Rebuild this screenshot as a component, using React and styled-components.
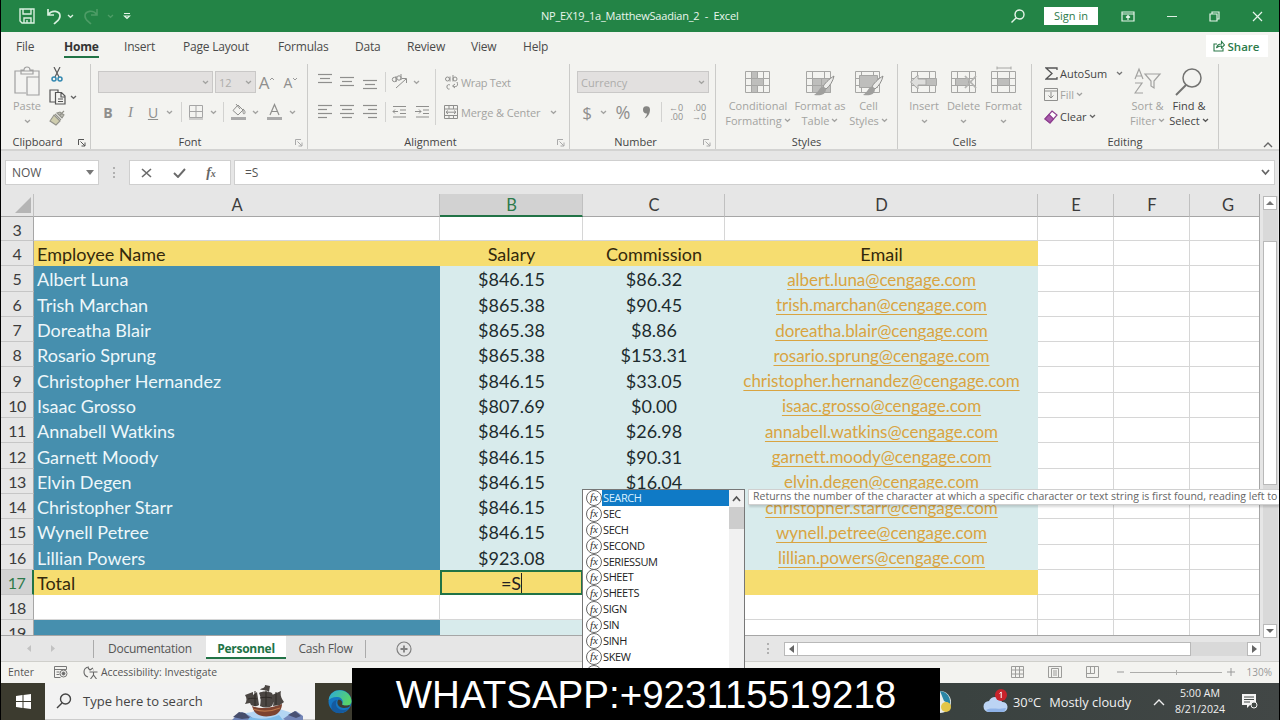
import React from 'react';
import styled, { createGlobalStyle } from 'styled-components';

const people = [
  ['Albert Luna', '$846.15', '$86.32', 'albert.luna@cengage.com'],
  ['Trish Marchan', '$865.38', '$90.45', 'trish.marchan@cengage.com'],
  ['Doreatha Blair', '$865.38', '$8.86', 'doreatha.blair@cengage.com'],
  ['Rosario Sprung', '$865.38', '$153.31', 'rosario.sprung@cengage.com'],
  ['Christopher Hernandez', '$846.15', '$33.05', 'christopher.hernandez@cengage.com'],
  ['Isaac Grosso', '$807.69', '$0.00', 'isaac.grosso@cengage.com'],
  ['Annabell Watkins', '$846.15', '$26.98', 'annabell.watkins@cengage.com'],
  ['Garnett Moody', '$846.15', '$90.31', 'garnett.moody@cengage.com'],
  ['Elvin Degen', '$846.15', '$16.04', 'elvin.degen@cengage.com'],
  ['Christopher Starr', '$846.15', '', 'christopher.starr@cengage.com'],
  ['Wynell Petree', '$846.15', '', 'wynell.petree@cengage.com'],
  ['Lillian Powers', '$923.08', '', 'lillian.powers@cengage.com'],
];

const functions = [
  'SEARCH', 'SEC', 'SECH', 'SECOND', 'SERIESSUM', 'SHEET',
  'SHEETS', 'SIGN', 'SIN', 'SINH', 'SKEW',
];

const menuTabs = ['File', 'Home', 'Insert', 'Page Layout', 'Formulas', 'Data', 'Review', 'View', 'Help'];

const Icon = ({ w = 16, h = 16, box, color = '#8f8f8d', sw = 1, children }) => (
  <Svg width={w} height={h} viewBox={box || `0 0 ${w} ${h}`} stroke={color} strokeWidth={sw} fill="none">
    {children}
  </Svg>
);

const Chevron = ({ color = '#a3a3a1', w = 7 }) => (
  <Icon w={w} h={5} box="0 0 7 5" color={color} sw={1.3}>
    <path d="M1 1l2.5 2.3L6 1" />
  </Icon>
);

const Launcher = ({ color }) => (
  <Icon w={8} h={8} color={color}>
    <path d="M.5 6V.5H6M2.5 2.5L7 7M7 3.5V7H3.5" />
  </Icon>
);

const Lines = ({ rows, y = 0 }) => (
  <Icon w={15} h={18} sw={1.2}>
    {rows.map(([x, len], i) => (
      <path key={i} d={`M${x} ${y + i * 4 + 1.5}h${len}`} />
    ))}
  </Icon>
);

const TableIcon = ({ fill, children, w = 28 }) => (
  <Icon w={w} h={30} color="#a6a6a4">
    <path d="M1.500 5.500h24v21h-24zM1.500 12.500h24M1.500 19.500h24M7.500 5.500v21M19.500 5.500v21" />
    {fill && <path d={fill} fill="#bebebc" stroke="#a6a6a4" />}
    {children}
  </Icon>
);

const Brush = () => (
  <>
    <path d="M29 10c-5 3-10 8-11 11l3 2c4-3 7-8 8-13z" fill="#ececea" stroke="#8f8f8d" />
    <path d="M18 21c-4 0-4 5-9 8 6 1 12 0 12-6z" fill="#9f9f9d" stroke="none" />
  </>
);

const Titlebar = () => (
  <TitleRow>
    <Slot $w={36} $ml={8}>
      <Icon w={16} h={16} color="#d9f0df" sw={1.4}>
        <path d="M1 1h14v14H3l-2-2zM4 1v5h8V1M5 15v-5h7v5M8 15v-3" />
      </Icon>
    </Slot>
    <Slot $w={18}>
      <Icon w={16} h={17} color="#d9f0df" sw={1.7}>
        <path d="M2 1v6h6M2 7c4-6 12-4 12 1 0 4-3 5-6 8" />
      </Icon>
    </Slot>
    <Slot $w={14}><Chevron color="#d9f0df" /></Slot>
    <Slot $w={28}>
      <Icon w={16} h={17} color="#4d9c66" sw={1.6}>
        <path d="M14 1v6H8M14 7C10 1 2 3 2 8c0 4 3 5 6 8" />
      </Icon>
    </Slot>
    <Slot $w={10}><Chevron color="#4d9c66" /></Slot>
    <Slot $w={24}>
      <Icon w={8} h={8} color="#e4f4e8" sw={1.2}><path d="M1 1.500h6M1.500 4l2.500 2.500L6.500 4z" /></Icon>
    </Slot>
    <DocTitle>NP_EX19_1a_MatthewSaadian_2&nbsp; -&nbsp; Excel</DocTitle>
    <Slot $w={26}>
      <Icon w={14} h={14} color="#e4f4e8" sw={1.4}><circle cx="8.500" cy="5.500" r="4.500" /><path d="M5 9l-4.500 4.500" /></Icon>
    </Slot>
    <SignIn>Sign in</SignIn>
    <Slot $w={60}>
      <Icon w={14} h={11} color="#e4f4e8" sw={1.2}><path d="M1 1h12v9H1zM1 3h12M7 9V4.500M5 6.500l2-2 2 2" /></Icon>
    </Slot>
    <Slot $w={28}><Icon w={10} h={3} color="#dff0e4"><path d="M0 1.500h10" /></Icon></Slot>
    <Slot $w={57}>
      <Icon w={11} h={11} color="#e4f4e8" sw={1.2}><path d="M1 3h7v7H1zM3 3V1h7v7H8" /></Icon>
    </Slot>
    <Slot $w={29}><Icon w={11} h={11} color="#e8f5ec" sw={1.2}><path d="M1 1l9 9M10 1l-9 9" /></Icon></Slot>
  </TitleRow>
);

const RibbonTabs = () => (
  <TabRow>
    {menuTabs.map((tab) => (
      <MenuTab key={tab} $active={tab === 'Home'}>{tab}</MenuTab>
    ))}
    <Share>
      <Icon w={12} h={12} color="#2c7a4b" sw={1.1}>
        <path d="M4 4H1v7h9V8M3.500 8c.5-3 2-4 5-4V1.500L11.500 5 8.500 8V6c-2 0-3.500 0-5 2z" />
      </Icon>
      Share
    </Share>
  </TabRow>
);

const ClipboardGroup = () => (
  <Group $w={90}>
    <Body $pl={4}>
      <BigTool $w={44}>
        <Icon w={28} h={30} color="#a0a0a0" sw={1.2}>
          <path d="M13 27H2V5h24v6M8 8V4h3c0-4 6-4 6 0h3v4zM14 11h12v18H14z" fill="#f3f3f1" />
        </Icon>
        <span>Paste</span>
        <Chevron />
      </BigTool>
      <Stack>
        <Line $h={22} $gap={7}>
          <Icon w={16} h={16} sw={1.2}>
            <path d="M5 0l5 10M11 0L6 10" stroke="#5a5a5a" />
            <g stroke="#3288b0" strokeWidth="1.500"><circle cx="5" cy="12" r="2" /><circle cx="11" cy="12" r="2" /></g>
          </Icon>
        </Line>
        <Line $h={22} $gap={4}>
          <Icon w={17} h={16} color="#555" sw={1.2}>
            <path d="M6 13H1V1h8v2M6.500 3.500h6l3.500 3.500v8H6.500zM12 4v4h4M9 10h5M9 12.500h5" />
          </Icon>
          <Chevron color="#666" />
        </Line>
        <Line $h={20}>
          <Icon w={17} h={16} color="#92928a" sw={1.1}>
            <path d="M15 1l-4 4M6 4l6 6M8 3l5 5 2-3-4-3z" fill="#b9b9b0" />
            <path d="M5 5l6 6-4 4-6-4z" fill="#cfcdae" />
          </Icon>
        </Line>
      </Stack>
    </Body>
    <GroupLabel $pr={16}>Clipboard</GroupLabel>
    <Corner><Launcher color="#555" /></Corner>
  </Group>
);

const FontGroup = () => (
  <Group $w={217}>
    <ToolRow $pl={7}>
      <Combo $w={115}><Chevron /></Combo>
      <Combo $w={41} $ml={2}><span>12</span><Chevron /></Combo>
      <Slot $w={22}><Letter $size={17}>A</Letter><Icon w={6} h={12} color="#999"><path d="M1 4l2-2 2 2" /></Icon></Slot>
      <Slot $w={22} $ml={2}><Letter $size={14}>A</Letter><Icon w={6} h={12} color="#999"><path d="M1 2l2 2 2-2" /></Icon></Slot>
    </ToolRow>
    <ToolRow $pl={6}>
      <Slot $w={22}><Letter $size={14} $bold>B</Letter></Slot>
      <Slot $w={23}><Letter $size={15} $italic>I</Letter></Slot>
      <Slot $w={22}><Letter $size={14} $under>U</Letter></Slot>
      <Slot $w={11}><Chevron /></Slot>
      <Bar $ml={6} />
      <Slot $w={28}><Icon w={16} h={16} color="#a5a5a5"><path d="M1.500 1.500h13v12h-13zM8 1v13M1 7.500h14M1 15h14" /></Icon></Slot>
      <Slot $w={7}><Chevron /></Slot>
      <Bar $ml={6} />
      <Slot $w={28}>
        <Icon w={17} h={18}>
          <path d="M8 2L3 7.500l5 4.500 5-5zM6 1l4 5M13 6c3 2 2 5 1 5s-1-2-1-5z" />
          <path d="M1 15.500h15" strokeWidth="3" stroke="#aaa" />
        </Icon>
      </Slot>
      <Slot $w={7}><Chevron /></Slot>
      <Slot $w={30}>
        <Icon w={15} h={18}>
          <path d="M3 12L7.500 1.500 12 12M4.500 8.500h6" strokeWidth="1.200" />
          <path d="M0 15.500h15" strokeWidth="3" stroke="#aaa" />
        </Icon>
      </Slot>
      <Slot $w={7}><Chevron /></Slot>
    </ToolRow>
    <GroupLabel $pr={18}>Font</GroupLabel>
    <Corner><Launcher color="#aaa" /></Corner>
  </Group>
);

const AlignmentGroup = () => (
  <Group $w={262}>
    <Body>
      <Stack>
        <ToolRow $pl={6}>
          <Slot $w={22}><Lines rows={[[0, 14], [2, 10], [0, 14]]} y={0} /></Slot>
          <Slot $w={23}><Lines rows={[[0, 14], [2, 10], [0, 14]]} y={3} /></Slot>
          <Slot $w={22}><Lines rows={[[0, 14], [2, 10], [0, 14]]} y={6} /></Slot>
          <Bar $ml={4} />
          <Slot $w={27}>
            <Icon w={17} h={16}>
              <circle cx="3.500" cy="5.500" r="2.200" /><circle cx="8" cy="4" r="2.200" /><path d="M5 2v6M10 0v6M5 14L15 5M11 4.500h4.500V9" />
            </Icon>
          </Slot>
          <Slot $w={7}><Chevron /></Slot>
        </ToolRow>
        <ToolRow $pl={6}>
          <Slot $w={22}><Lines rows={[[0, 14], [0, 9], [0, 14], [0, 9]]} y={1} /></Slot>
          <Slot $w={23}><Lines rows={[[0, 14], [2, 10], [0, 14], [2, 10]]} y={1} /></Slot>
          <Slot $w={22}><Lines rows={[[0, 14], [5, 9], [0, 14], [5, 9]]} y={1} /></Slot>
          <Bar $ml={4} />
          <Slot $w={27}><Icon w={15} h={14}><path d="M1 1.500h13M8 5h6M8 8.500h6M1 12h13M6 6.500H1M3 4.500l-2 2 2 2" /></Icon></Slot>
          <Slot $w={18}><Icon w={15} h={14}><path d="M1 1.500h13M8 5h6M8 8.500h6M1 12h13M0 6.500h6M4 4.500l2 2-2 2" /></Icon></Slot>
        </ToolRow>
      </Stack>
      <Bar $h={56} $ml={4} $mt={5} />
      <Stack>
        <ToolRow $pl={6}>
          <Slot $w={19}>
            <Icon w={15} h={17}>
              <circle cx="3.500" cy="5" r="2" /><path d="M6 2.500V7.500M9 1v6.500M6 11c-4-2-4 5-.5 4M13 8c2 5-2 5-4 4M11 10l-2.500 2 2.500 2" /><circle cx="11" cy="5" r="2" />
            </Icon>
          </Slot>
          <Dim $ls={-0.3}>Wrap Text</Dim>
        </ToolRow>
        <ToolRow $pl={6}>
          <Slot $w={19}>
            <Icon w={15} h={15}><path d="M.5 .5h13v13H.5zM.5 4h13M.5 10.500h13M5 .5V4M9.500 .5V4M5 10.500v3M9.500 10.500v3M2 7.200h10M4 5.500L2 7.200 4 9M10 5.500l2 1.700L10 9" /></Icon>
          </Slot>
          <Dim $ls={-0.1}>Merge &amp; Center</Dim>
          <Slot $w={7} $ml={9}><Chevron /></Slot>
        </ToolRow>
      </Stack>
    </Body>
    <GroupLabel $pr={16}>Alignment</GroupLabel>
    <Corner><Launcher color="#aaa" /></Corner>
  </Group>
);

const NumberGroup = () => (
  <Group $w={146}>
    <ToolRow $pl={7}>
      <Combo $w={132}><span>Currency</span><Chevron /></Combo>
    </ToolRow>
    <ToolRow $pl={6}>
      <Slot $w={22}><Letter $size={17}>$</Letter></Slot>
      <Slot $w={10}><Chevron /></Slot>
      <Slot $w={30}><Letter $size={18}>%</Letter></Slot>
      <Slot $w={18}>
        <Icon w={10} h={15} sw={0}><path d="M1 5a3.500 3.500 0 1 1 7-.5c0 5-3 8-5.500 9 1.500-2 2.500-4 2.500-5C3 9 1 7.500 1 5z" fill="#858583" /></Icon>
      </Slot>
      <Bar $ml={5} />
      <Slot $w={28}><Decimals><span>←0</span><span>.00</span></Decimals></Slot>
      <Slot $w={18}><Decimals><span>.00</span><span>→0</span></Decimals></Slot>
    </ToolRow>
    <GroupLabel $pr={14}>Number</GroupLabel>
    <Corner><Launcher color="#aaa" /></Corner>
  </Group>
);

const StylesGroup = () => (
  <Group $w={182}>
    <Body $pl={7}>
      <BigTool $w={70}>
        <TableIcon fill="M7.500 5.500h6v7h6v7h-6v7h-6z"><path d="M7.500 12.500h6M7.500 19.500h6" /></TableIcon>
        <span>Conditional</span>
        <span>Formatting <Chevron /></span>
      </BigTool>
      <BigTool $w={54}>
        <TableIcon fill="M7.500 12.500h18v14h-18z" w={30}><path d="M7.500 19.500h18M16.500 12.500v14" /><Brush /></TableIcon>
        <span>Format as</span>
        <span>Table <Chevron /></span>
      </BigTool>
      <BigTool $w={43}>
        <TableIcon fill="M5.500 9.500h18v12h-18z" w={30}><Brush /></TableIcon>
        <span>Cell</span>
        <span>Styles <Chevron /></span>
      </BigTool>
    </Body>
    <GroupLabel>Styles</GroupLabel>
  </Group>
);

const CellsGroup = () => (
  <Group $w={134}>
    <Body $pl={6}>
      <BigTool $w={40}>
        <TableIcon fill="M9.500 12.500h17v7h-17z"><path d="M8 9l-7.500 7L8 23v-4h8v-6H8z" fill="#dededc" /></TableIcon>
        <span>Insert</span>
        <Chevron />
      </BigTool>
      <BigTool $w={39}>
        <TableIcon fill="M5.500 12.500h13v7h-13z"><path d="M15 10l11 12M26 10L15 22" strokeWidth="1.800" stroke="#b4b4b2" /></TableIcon>
        <span>Delete</span>
        <Chevron />
      </BigTool>
      <BigTool $w={41}>
        <TableIcon fill="M7.500 12.500h12v7h-12z"><path d="M7 2h14M7 .5v3M21 .5v3" /></TableIcon>
        <span>Format</span>
        <Chevron />
      </BigTool>
    </Body>
    <GroupLabel>Cells</GroupLabel>
  </Group>
);

const EditingGroup = () => (
  <Group $w={187}>
    <Body $pl={10}>
      <Stack $w={86}>
        <Line $h={19}>
          <Slot $w={18}><Icon w={13} h={13} color="#555" sw={1.3}><path d="M12 3V1H1l6 5.500L1 12h11v-2" /></Icon></Slot>
          <Dark>AutoSum</Dark>
          <Slot $w={7} $ml={9}><Chevron color="#777" /></Slot>
        </Line>
        <Line $h={23}>
          <Slot $w={18}><Icon w={14} h={13}><path d="M.5 .5h13v12H.5zM.5 3h13M7 4v6M4.500 7.500L7 10l2.500-2.500" /></Icon></Slot>
          <Dim>Fill</Dim>
          <Slot $w={10}><Chevron /></Slot>
        </Line>
        <Line $h={21}>
          <Slot $w={18}>
            <Icon w={14} h={14} color="#8d3f8f" sw={1.2}><path d="M8 1l5 4-7 8-5-4z" fill="#fff" /><path d="M5 4.500L9.500 9 6 13 1 9z" fill="#a95bab" /></Icon>
          </Slot>
          <Dark>Clear</Dark>
          <Slot $w={11}><Chevron color="#666" /></Slot>
        </Line>
      </Stack>
      <BigTool $w={39}>
        <Icon w={28} h={30} sw={1.2} color="#a2a2a0">
          <path d="M1 13L5 3l4 10M2.500 10h5M1 17h7L1 27h8M11 8h15l-6 7v7l-3-2v-5z" />
        </Icon>
        <span>Sort &amp;</span>
        <span>Filter <Chevron /></span>
      </BigTool>
      <BigTool $w={44} $dark>
        <Icon w={30} h={30} color="#737371" sw={1.5}><circle cx="18" cy="12" r="9" /><path d="M12 19L2 29" strokeWidth="2" /></Icon>
        <span>Find &amp;</span>
        <span>Select <Chevron color="#555" /></span>
      </BigTool>
    </Body>
    <GroupLabel>Editing</GroupLabel>
  </Group>
);

const FormulaBar = () => (
  <FormulaRow>
    <Field $w={94}>
      <FieldText $pl={6}>NOW</FieldText>
      <Icon w={8} h={5} sw={0}><path d="M0 0h8L4 5z" fill="#777" /></Icon>
    </Field>
    <Slot $w={30}><Dots /></Slot>
    <Field $w={102}>
      <Slot $w={33}><Icon w={11} h={10} color="#6a6a6a" sw={1.6}><path d="M1 1l9 8M10 1L1 9" /></Icon></Slot>
      <Slot $w={33}><Icon w={13} h={10} color="#6a6a6a" sw={1.9}><path d="M1 5l4 4 7-8" /></Icon></Slot>
      <Slot $w={30}><Fx>f<small>x</small></Fx></Slot>
    </Field>
    <Field $w={1041} $ml={3}>
      <FieldText $pl={10}>=S</FieldText>
      <Icon w={9} h={7} color="#666" sw={1.8}><path d="M1 1l3.500 4L8 1" /></Icon>
    </Field>
  </FormulaRow>
);

const Sheet = () => (
  <SheetArea>
    <Grid>
      <ColHead $corner>
        <Icon w={16} h={16} sw={0}><path d="M16 0v16H0z" fill="#b5b5b5" /></Icon>
      </ColHead>
      {['A', 'B', 'C', 'D', 'E', 'F', 'G'].map((c) => (
        <ColHead key={c} $active={c === 'B'}>{c}</ColHead>
      ))}

      <RowHead>3</RowHead>
      <Cell /><Cell /><Cell /><Cell /><Cell /><Cell /><Cell />

      <RowHead>4</RowHead>
      <Cell $tone="gold" $left>Employee Name</Cell>
      <Cell $tone="gold">Salary</Cell>
      <Cell $tone="gold">Commission</Cell>
      <Cell $tone="gold">Email</Cell>
      <Cell /><Cell /><Cell />

      {people.map(([name, salary, commission, email], i) => (
        <React.Fragment key={name}>
          <RowHead>{i + 5}</RowHead>
          <Cell $tone="blue" $left>{name}</Cell>
          <Cell $tone="pale">{salary}</Cell>
          <Cell $tone="pale">{commission}</Cell>
          <Cell $tone="pale"><Email>{email}</Email></Cell>
          <Cell /><Cell /><Cell />
        </React.Fragment>
      ))}

      <RowHead $active>17</RowHead>
      <Cell $tone="gold" $left>Total</Cell>
      <EditCell>=S<Caret /></EditCell>
      <Cell $tone="gold" />
      <Cell $tone="gold" />
      <Cell /><Cell /><Cell />

      <RowHead>18</RowHead>
      <Cell /><Cell /><Cell /><Cell /><Cell /><Cell /><Cell />

      <RowHead>19</RowHead>
      <Cell $tone="blue" />
      <Cell $tone="pale" />
      <Cell /><Cell /><Cell /><Cell /><Cell />
    </Grid>
    <VScroll>
      <ScrollButton><Icon w={8} h={4} sw={0}><path d="M0 4h8L4 0z" fill="#777" /></Icon></ScrollButton>
      <VThumb />
      <ScrollButton><Icon w={8} h={4} sw={0}><path d="M0 0h8L4 4z" fill="#666" /></Icon></ScrollButton>
    </VScroll>
    <Suggestions>
      <SuggestionList>
        {functions.map((fn, i) => (
          <Suggestion key={fn}>
            <FxBadge><i>fx</i></FxBadge>
            <SuggestionName $active={i === 0}>{fn}</SuggestionName>
          </Suggestion>
        ))}
        <Suggestion><FxBadge /></Suggestion>
      </SuggestionList>
      <SuggestionScroll>
        <Slot $w={15}><Icon w={9} h={17} color="#555" sw={1.7}><path d="M1 11l3.500-4L8 11" /></Icon></Slot>
        <SuggestionThumb />
      </SuggestionScroll>
    </Suggestions>
    <Hint>Returns the number of the character at which a specific character or text string is first found, reading left to</Hint>
  </SheetArea>
);

const SheetTabs = () => (
  <SheetTabRow>
    <Slot $w={24} $ml={15}><Icon w={5} h={7} sw={0}><path d="M5 0v7L1 3.500z" fill="#c2c2c2" /></Icon></Slot>
    <Slot $w={26}><Icon w={5} h={7} sw={0}><path d="M0 0v7l4-3.500z" fill="#c2c2c2" /></Icon></Slot>
    <Bar $h={18} $ml={27} $dark />
    <SheetTab $w={112}>Documentation</SheetTab>
    <SheetTab $w={80} $active>Personnel</SheetTab>
    <SheetTab $w={79}>Cash Flow</SheetTab>
    <Bar $h={18} $dark />
    <Slot $w={76}>
      <Icon w={16} h={16} color="#808080" sw={1.2}><circle cx="8" cy="8" r="7" /><path d="M8 4.500v7M4.500 8h7" strokeWidth="1.800" /></Icon>
    </Slot>
    <Spacer />
    <Slot $w={32}><Dots /></Slot>
    <ScrollButton><Icon w={5} h={8} sw={0}><path d="M5 0v8L0 4z" fill="#666" /></Icon></ScrollButton>
    <HThumb />
    <HTrack />
    <ScrollButton><Icon w={5} h={8} sw={0}><path d="M0 0v8l5-4z" fill="#666" /></Icon></ScrollButton>
  </SheetTabRow>
);

const StatusBar = () => (
  <StatusRow>
    <StatusText $w={46}>Enter</StatusText>
    <Icon w={14} h={12} color="#777"><path d="M.5 .5h12v3M.5 .5v11h6M.5 3.500h12M2.500 6h3M2.500 8.500h3" /><circle cx="9.500" cy="7.500" r="3.500" /><circle cx="9.500" cy="7.500" r="1.500" fill="#666" /></Icon>
    <Slot $w={15} $ml={15}>
      <Icon w={15} h={13} color="#666" sw={1.1}><path d="M6 1C2 1 1 4 1 6s1 4 4 5M5 2l2 2 3-2M10 4h.5M6.500 6h8M10.500 6v3l-3 4M10.500 9l3 4" /></Icon>
    </Slot>
    <StatusText $ml={3} $w={200}>Accessibility: Investigate</StatusText>
    <Spacer />
    <Icon w={13} h={12} color="#9c9c9a"><path d="M.5 .5h12v11H.5zM4.500 .5v11M8.500 .5v11M.5 4h12M.5 8h12" /></Icon>
    <Slot $w={14} $ml={24}><Icon w={14} h={12} color="#9c9c9a"><path d="M.5 .5h13v11H.5zM3.500 2.500h7v9M3.500 2.500v9M5 5h4M5 7h4M5 9h4" /></Icon></Slot>
    <Slot $w={14} $ml={24}><Icon w={13} h={12} color="#9c9c9a"><path d="M.5 .5h12v11H.5zM4.500 .5v7M8.500 .5v7h-8" /></Icon></Slot>
    <Slot $w={7} $ml={17}><Icon w={7} h={2} color="#999"><path d="M0 1h7" /></Icon></Slot>
    <Slot $w={92} $ml={6}><Icon w={92} h={7} color="#adadab"><path d="M0 3.500h92M46.500 1v5" /></Icon></Slot>
    <Slot $w={8} $ml={5}><Icon w={8} h={8} color="#999"><path d="M0 4h8M4 0v8" /></Icon></Slot>
    <Zoom>130%</Zoom>
  </StatusRow>
);

const Ship = () => (
  <Svg width="76" height="37" viewBox="0 0 76 37">
    <path d="M8 37c5-6 9-7 16-8 12-4 26-4 34-1 7 2 10 5 14 9z" fill="#b3d5f3" />
    <path d="M4 37l4-4 6-4 8 4 5 4z" fill="#6f84b8" />
    <path d="M5 34l6-5 6 1 5 5-8 1z" fill="#474e6c" />
    <path d="M55 36l7-5 6-3 7 5v4H57z" fill="#7486b8" />
    <path d="M60 32l7-4 6 5-5 2z" fill="#4a5173" />
    <path d="M24 23c8 3 17 3 30-2 0 5-3 9-7 11-6 2-14 2-18-1-3-2-4-5-5-8z" fill="#7d4330" />
    <path d="M25 26c8 3 17 3 27-1" stroke="#b9764a" strokeWidth="1.200" fill="none" />
    <path d="M17 12l8-3v3l4-3 2 13c-3 2-6 1-8 0l-1-2-5 1c2-3 2-6 0-9zM31 10c3-2 9-2 13 0 2 4 2 9 0 13-4 2-8 2-12 0 1-5 1-9-1-13zM44 12l9-4c-1 4 0 7 3 11l-4 3-7 1c1-4 0-7-1-11z" fill="#4b4643" />
    <path d="M27 8v15M38 5v18M48 9v13M20 16c3-1 7-1 9 0M32 15c4-1 8-1 12 0" stroke="#2f2a27" strokeWidth="1" fill="none" />
    <path d="M32 7c2-3 5-1 5-5l5 1-1 6-3-2c-2 1-4-1-6 0z" fill="#4b4643" />
    <path d="M22 34c10 3 20 2 29-2l4 5H20z" fill="#7dbbe9" />
  </Svg>
);

const EdgeLogo = () => (
  <Svg width="24" height="25" viewBox="0 0 24 25">
    <defs>
      <linearGradient id="edgeTop" x1="0" y1="0" x2="1" y2="0.400">
        <stop offset="0" stopColor="#2ba9dd" />
        <stop offset="1" stopColor="#58d36a" />
      </linearGradient>
    </defs>
    <circle cx="12" cy="12.500" r="11.500" fill="#1476c2" />
    <path d="M.7 11C2-2 22-2 23.500 12c.3 5-7 6-9.500 3.500 2-3 0-7-4-7.500C6 7.500 2 9 .7 11z" fill="url(#edgeTop)" />
    <path d="M9 11c-3 4 0 10 6 10 2 0 4 0 6-2-4 6-12 7-17 2C2 16 5 11 9 11z" fill="#155a9e" />
    <path d="M10 11c-2 4 1 8 6 8 3 0 5-1 6-2 .5-2-5 1-8-1.500C15 13 13 10 10 11z" fill="#3d3d33" />
  </Svg>
);

const Taskbar = () => (
  <TaskRow>
    <Slot $w={44}>
      <Icon w={17} h={17} sw={0}><path d="M1 3l6.500-1v6H1zM8.500 2L16 1v7H8.500zM1 9h6.500v6L1 14zM8.500 9H16v7l-7.500-1z" fill="#fff" /></Icon>
    </Slot>
    <SearchBox>
      <Icon w={16} h={16} color="#444" sw={1.4}><circle cx="9.500" cy="6" r="5" /><path d="M6 10l-5 5" /></Icon>
      <SearchText>Type here to search</SearchText>
      <Ship />
    </SearchBox>
    <Slot $w={24} $ml={13}><EdgeLogo /></Slot>
    <Spacer />
    <Slot $w={24}>
      <Svg width="24" height="24" viewBox="0 0 24 24">
        <circle cx="12" cy="12" r="11" fill="#e8ecea" />
        <path d="M12 1a11 11 0 0 1 10 13l-6-3z" fill="#2a86a6" />
        <circle cx="18" cy="17" r="5" fill="#e3c648" />
      </Svg>
    </Slot>
    <Slot $w={26} $ml={31}>
      <Svg width="26" height="28" viewBox="0 0 26 28">
        <path d="M6 24a5.500 5.500 0 0 1 0-11 7 7 0 0 1 13 1 5 5 0 0 1 1 10z" fill="#bcd4f4" />
        <path d="M3 22c6-3 10 0 20-2-1 3-2 4-4 4H6c-1 0-2-1-3-2z" fill="#8fb3e8" />
        <circle cx="18" cy="7" r="6" fill="#c8232c" />
        <path d="M16.500 5.500l1.700-1.500v6" stroke="#fff" fill="none" />
      </Svg>
    </Slot>
    <Weather><span>30°C</span><span>Mostly cloudy</span></Weather>
    <Slot $w={12}><Icon w={12} h={8} color="#eee" sw={1.4}><path d="M1 7l5-5 5 5" /></Icon></Slot>
    <Clock><span>5:00 AM</span><span>8/21/2024</span></Clock>
    <Slot $w={18}>
      <Icon w={17} h={17} sw={0}>
        <path d="M1 1h14v11H9l-3 3v-3H1z" fill="#f4f4f4" />
        <path d="M3 4h10M3 6.500h10M3 9h6" stroke="#444b48" strokeWidth="1" />
        <circle cx="13" cy="12" r="3" stroke="#f4f4f4" strokeWidth="1" fill="#444b48" />
      </Icon>
    </Slot>
  </TaskRow>
);

const App = () => (
  <Screen>
    <GlobalStyle />
    <Titlebar />
    <Ribbon>
      <RibbonTabs />
      <Groups>
        <ClipboardGroup />
        <FontGroup />
        <AlignmentGroup />
        <NumberGroup />
        <StylesGroup />
        <CellsGroup />
        <EditingGroup />
        <Collapse><Icon w={10} h={7} color="#666" sw={1.4}><path d="M1 6l4-4 4 4" /></Icon></Collapse>
      </Groups>
    </Ribbon>
    <FormulaBar />
    <Sheet />
    <SheetTabs />
    <StatusBar />
    <Taskbar />
    <Banner>WHATSAPP:+923115519218</Banner>
  </Screen>
);

const GlobalStyle = createGlobalStyle`
  * {
    box-sizing: border-box;
  }

  body {
    margin: 0;
    background: #000;
    overflow: hidden;
  }
`;

const Screen = styled.div`
  position: relative;
  display: flex;
  flex-direction: column;
  width: 1280px;
  height: 720px;
  overflow: hidden;
  border-left: 1px solid #000;
  border-right: 1px solid #000;
  background: #e6e6e6;
  color: #444;
  font-family: 'Open Sans', 'Noto Sans', sans-serif;
  font-size: 11px;
  white-space: nowrap;
`;

const Svg = styled.svg`
  display: block;
  flex: none;
`;

const Slot = styled.div`
  display: flex;
  flex: none;
  align-items: center;
  justify-content: center;
  width: ${(p) => p.$w}px;
  margin-left: ${(p) => p.$ml || 0}px;
`;

const Spacer = styled.div`
  flex: 1;
`;

const Bar = styled.div`
  flex: none;
  width: 1px;
  height: ${(p) => p.$h || 20}px;
  margin-left: ${(p) => p.$ml || 0}px;
  margin-top: ${(p) => p.$mt || 0}px;
  background: ${(p) => (p.$dark ? '#ababab' : '#d2d2d0')};
`;

const TitleRow = styled.header`
  display: flex;
  align-items: center;
  flex: none;
  height: 32px;
  padding-right: 7px;
  background: #238446;
`;

const DocTitle = styled.div`
  flex: 1;
  padding: 0 0 2px 402px;
  color: #eaf6ed;
  font-size: 11px;
  letter-spacing: -0.2px;
`;

const SignIn = styled.div`
  width: 54px;
  height: 18px;
  margin-left: 13px;
  background: #fff;
  color: #2c7a4b;
  line-height: 18px;
  text-align: center;
`;

const Ribbon = styled.section`
  flex: none;
  height: 119px;
  border-bottom: 2px solid #d3d3d2;
  background: #f3f3f0;
`;

const TabRow = styled.nav`
  display: grid;
  grid-template-columns: 48px 60px 59px 95px 77px 52px 64px 52px 1fr 62px;
  height: 32px;
  padding: 3px 11px 0 15px;
`;

const MenuTab = styled.div`
  justify-self: start;
  height: 23px;
  border-bottom: 2px solid ${(p) => (p.$active ? '#217346' : 'transparent')};
  color: ${(p) => (p.$active ? '#333' : '#4a4a4a')};
  font-size: 12px;
  font-weight: ${(p) => (p.$active ? 700 : 400)};
  letter-spacing: -0.2px;
  line-height: 23px;
`;

const Share = styled.div`
  display: flex;
  align-items: center;
  justify-content: center;
  gap: 3px;
  height: 22px;
  padding-right: 2px;
  background: #fff;
  color: #2c7a4b;
  font-size: 11.5px;
  font-weight: 600;
`;

const Groups = styled.div`
  display: flex;
  height: 85px;
`;

const Group = styled.div`
  position: relative;
  display: flex;
  flex-direction: column;
  flex: none;
  width: ${(p) => p.$w}px;
  border-right: 1px solid #cbcbc9;
`;

const Body = styled.div`
  display: flex;
  padding-left: ${(p) => p.$pl || 0}px;
`;

const Stack = styled.div`
  display: flex;
  flex-direction: column;
  width: ${(p) => (p.$w ? `${p.$w}px` : 'auto')};
`;

const Line = styled.div`
  display: flex;
  align-items: center;
  gap: ${(p) => p.$gap || 0}px;
  height: ${(p) => p.$h}px;
`;

const ToolRow = styled.div`
  display: flex;
  align-items: center;
  height: 24px;
  margin-top: 6px;
  padding-left: ${(p) => p.$pl}px;
`;

const BigTool = styled.div`
  display: flex;
  flex-direction: column;
  align-items: center;
  flex: none;
  width: ${(p) => p.$w}px;
  padding-top: 2px;
  color: ${(p) => (p.$dark ? '#444' : '#a3a3a1')};

  > svg:first-child {
    margin-bottom: 2px;
  }

  > span {
    display: flex;
    align-items: center;
    gap: 2px;
    height: 15px;
  }

  > svg:last-child {
    margin-top: 6px;
  }
`;

const GroupLabel = styled.div`
  margin-top: auto;
  padding-right: ${(p) => p.$pr || 0}px;
  color: #444;
  line-height: 14px;
  text-align: center;
`;

const Corner = styled.div`
  position: absolute;
  right: 4px;
  bottom: 2px;
`;

const Combo = styled.div`
  display: flex;
  align-items: center;
  justify-content: space-between;
  width: ${(p) => p.$w}px;
  height: 22px;
  margin-left: ${(p) => p.$ml || 0}px;
  padding: 0 3px;
  border: 1px solid #c9c8c7;
  background: #e2e0df;
  color: #adadab;

  > svg:only-child {
    margin-left: auto;
  }
`;

const Letter = styled.span`
  color: #8f8f8d;
  font-size: ${(p) => p.$size}px;
  font-style: ${(p) => (p.$italic ? 'italic' : 'normal')};
  font-family: ${(p) => (p.$italic ? "'Liberation Serif', serif" : 'inherit')};
  font-weight: ${(p) => (p.$bold ? 700 : 400)};
  text-decoration: ${(p) => (p.$under ? 'underline' : 'none')};
`;

const Decimals = styled.div`
  display: flex;
  flex-direction: column;
  align-items: flex-end;
  color: #8f8f8d;
  font-size: 9px;
  line-height: 9px;
`;

const Dim = styled.span`
  color: #a3a3a1;
  letter-spacing: ${(p) => p.$ls || 0}px;
`;

const Dark = styled.span`
  color: #444;
`;

const Collapse = styled.div`
  display: flex;
  flex: 1;
  align-items: flex-end;
  justify-content: flex-end;
  padding: 0 6px 1px 0;
`;

const FormulaRow = styled.div`
  display: flex;
  flex: none;
  align-items: center;
  height: 43px;
  padding-left: 4px;
`;

const Field = styled.div`
  display: flex;
  align-items: center;
  justify-content: space-between;
  flex: none;
  width: ${(p) => p.$w}px;
  height: 25px;
  margin-left: ${(p) => p.$ml || 0}px;
  padding-right: 4px;
  border: 1px solid #cfcfcf;
  background: #fff;
`;

const FieldText = styled.span`
  padding-left: ${(p) => p.$pl}px;
  color: #555;
  font-size: 12px;
`;

const Fx = styled.span`
  color: #666;
  font: italic 700 14px 'Liberation Serif', serif;

  small {
    font-size: 10px;
  }
`;

const Dots = styled.div`
  height: 11px;
  border-left: 2px dotted #b0b0b0;
`;

const SheetArea = styled.main`
  position: relative;
  display: flex;
  flex: none;
  height: 442px;
`;

const Grid = styled.div`
  display: grid;
  grid-template-columns: 33px 406px 143px 142px 313px 76px 76px 76px;
  grid-template-rows: 23px 24px repeat(14, 25.3px) 25px 25.3px;
  align-content: start;
  width: 1259px;
  overflow: hidden;
  border-right: 1px solid #a6a6a6;
  border-bottom: 1px solid #a6a6a6;
  color: #1d1d1d;
  font-family: Lato, 'Open Sans', sans-serif;
  font-size: 18px;
`;

const ColHead = styled.div`
  display: flex;
  align-items: center;
  justify-content: ${(p) => (p.$corner ? 'flex-end' : 'center')};
  padding: 0 ${(p) => (p.$corner ? 2 : 0)}px 0 1px;
  border-right: 1px solid #c0c0c0;
  border-bottom: ${(p) => (p.$active ? '2px solid #217346' : '1px solid #a6a6a6')};
  background: ${(p) => (p.$active ? '#d2d2d2' : '#e6e6e6')};
  color: ${(p) => (p.$active ? '#2d7a4b' : '#3c3c3c')};
  font-size: 16.5px;
`;

const RowHead = styled.div`
  display: flex;
  align-items: center;
  justify-content: center;
  padding-top: 1px;
  border-right: ${(p) => (p.$active ? '2px solid #217346' : '1px solid #a6a6a6')};
  border-bottom: 1px solid #c6c6c6;
  background: ${(p) => (p.$active ? '#d2d2d2' : '#e6e6e6')};
  color: ${(p) => (p.$active ? '#2d7a4b' : '#3c3c3c')};
  font-size: 16px;
  letter-spacing: -0.5px;
`;

const tones = {
  gold: ['#f6dd70', '#33290c'],
  blue: ['#468fae', '#eef7fa'],
  pale: ['#d8ebec', '#1d2b2e'],
};

const Cell = styled.div`
  display: flex;
  align-items: center;
  justify-content: ${(p) => (p.$left ? 'flex-start' : 'center')};
  padding: 1px 0 0 ${(p) => (p.$left ? 3 : 0)}px;
  border-right: ${(p) => (p.$tone ? 0 : 1)}px solid #d6d6d6;
  border-bottom: ${(p) => (p.$tone ? 0 : 1)}px solid #d6d6d6;
  background: ${(p) => (p.$tone ? tones[p.$tone][0] : '#fff')};
  color: ${(p) => (p.$tone ? tones[p.$tone][1] : '#222')};
`;

const Email = styled.span`
  color: #d9a441;
  font-size: 17px;
  letter-spacing: -0.05px;
  text-decoration: underline;
  text-decoration-thickness: 1px;
  text-underline-offset: 3px;
`;

const EditCell = styled(Cell)`
  border: 2px solid #217346;
  background: #f6dd70;
`;

const Caret = styled.span`
  width: 1px;
  height: 20px;
  background: #222;
`;

const VScroll = styled.div`
  display: flex;
  flex-direction: column;
  width: 15px;
  height: 442px;
  margin: 2px 0 0 3px;
  background: #d9d9d9;
`;

const ScrollButton = styled.div`
  display: flex;
  align-items: center;
  justify-content: center;
  flex: none;
  width: 14px;
  height: 14px;
  border: 1px solid #b9b9b9;
  background: #fff;
`;

const VThumb = styled.div`
  width: 14px;
  height: 244px;
  margin: 31px 0 auto;
  border: 1px solid #b9b9b9;
  background: #fff;
`;

const Suggestions = styled.div`
  position: absolute;
  z-index: 2;
  top: 295px;
  left: 581px;
  display: flex;
  width: 163px;
  height: 190px;
  overflow: hidden;
  border: 1px solid #777;
  background: #fff;
`;

const SuggestionList = styled.div`
  flex: 1;
`;

const Suggestion = styled.div`
  display: flex;
  align-items: center;
  height: 15.9px;
  padding-left: 3px;
`;

const FxBadge = styled.span`
  display: flex;
  flex: none;
  align-items: center;
  justify-content: center;
  width: 16px;
  height: 16px;
  border: 1.5px solid #666;
  border-radius: 50%;
  color: #333;
  font: 11px/11px 'Liberation Serif', serif;
`;

const SuggestionName = styled.span`
  flex: 1;
  height: 16px;
  padding-left: 1px;
  background: ${(p) => (p.$active ? '#0f7ac6' : 'transparent')};
  color: ${(p) => (p.$active ? '#d8efff' : '#222')};
  font-size: 11px;
  line-height: 16px;
  letter-spacing: -0.4px;
`;

const SuggestionScroll = styled.div`
  width: 15px;
  background: #f1f1f1;
`;

const SuggestionThumb = styled.div`
  height: 22px;
  background: #cdcdcd;
`;

const Hint = styled.div`
  position: absolute;
  z-index: 2;
  top: 295px;
  left: 747px;
  width: 531px;
  height: 16px;
  overflow: hidden;
  padding-left: 4px;
  border: 1px solid #d0d0d0;
  border-right: 0;
  background: #fff;
  box-shadow: 1px 2px 2px rgba(0, 0, 0, 0.15);
  color: #666;
  font-size: 10.52px;
  line-height: 13px;
`;

const SheetTabRow = styled.div`
  display: flex;
  flex: none;
  align-items: center;
  height: 26px;
  padding-right: 18px;
  border-bottom: 1px solid #cfcfcb;
`;

const SheetTab = styled.div`
  width: ${(p) => p.$w}px;
  height: 23px;
  align-self: flex-start;
  border-bottom: 2px solid ${(p) => (p.$active ? '#217346' : 'transparent')};
  background: ${(p) => (p.$active ? '#fff' : 'transparent')};
  color: ${(p) => (p.$active ? '#217346' : '#555')};
  font-size: 12px;
  font-weight: ${(p) => (p.$active ? 700 : 400)};
  letter-spacing: -0.25px;
  line-height: 25px;
  text-align: center;
`;

const HThumb = styled.div`
  width: 393px;
  height: 14px;
  border: 1px solid #b9b9b9;
  border-left: 0;
  background: #fff;
`;

const HTrack = styled.div`
  width: 56px;
  height: 14px;
  background: #d9d9d9;
`;

const StatusRow = styled.div`
  display: flex;
  flex: none;
  align-items: center;
  height: 21px;
  padding: 0 7px 1px 7px;
  background: #f3f3f0;
`;

const StatusText = styled.span`
  width: ${(p) => p.$w}px;
  margin-left: ${(p) => p.$ml || 0}px;
  color: #555;
  font-size: 10.4px;
`;

const Zoom = styled.span`
  margin-left: 12px;
  color: #999;
  font-size: 10px;
`;

const TaskRow = styled.footer`
  display: flex;
  flex: none;
  align-items: center;
  height: 37px;
  padding-right: 21px;
  background: linear-gradient(90deg, #3c3b2f 0, #3c3b2f 30%, #3a4240 75%, #424746 100%);
  color: #f0f0f0;
`;

const SearchBox = styled.div`
  display: flex;
  align-items: center;
  width: 270px;
  height: 37px;
  padding-left: 11px;
  border-bottom: 1px solid #ccc;
  background: #f2f2f2;
`;

const SearchText = styled.span`
  width: 156px;
  padding-left: 11px;
  color: #444;
  font-size: 13px;
`;

const Weather = styled.div`
  display: flex;
  gap: 8px;
  width: 144px;
  padding-left: 4px;
  font-size: 12.8px;
`;

const Clock = styled.div`
  display: flex;
  flex-direction: column;
  align-items: center;
  width: 70px;
  margin-right: 5px;
  padding-bottom: 2px;
  font-size: 10.6px;
  line-height: 16px;
`;

const Banner = styled.div`
  position: absolute;
  z-index: 3;
  top: 668px;
  left: 351px;
  width: 588px;
  height: 52px;
  background: #000;
  color: #fff;
  font: 38.5px/54px 'Liberation Sans', Arial, sans-serif;
  text-align: center;
`;

export default App;
